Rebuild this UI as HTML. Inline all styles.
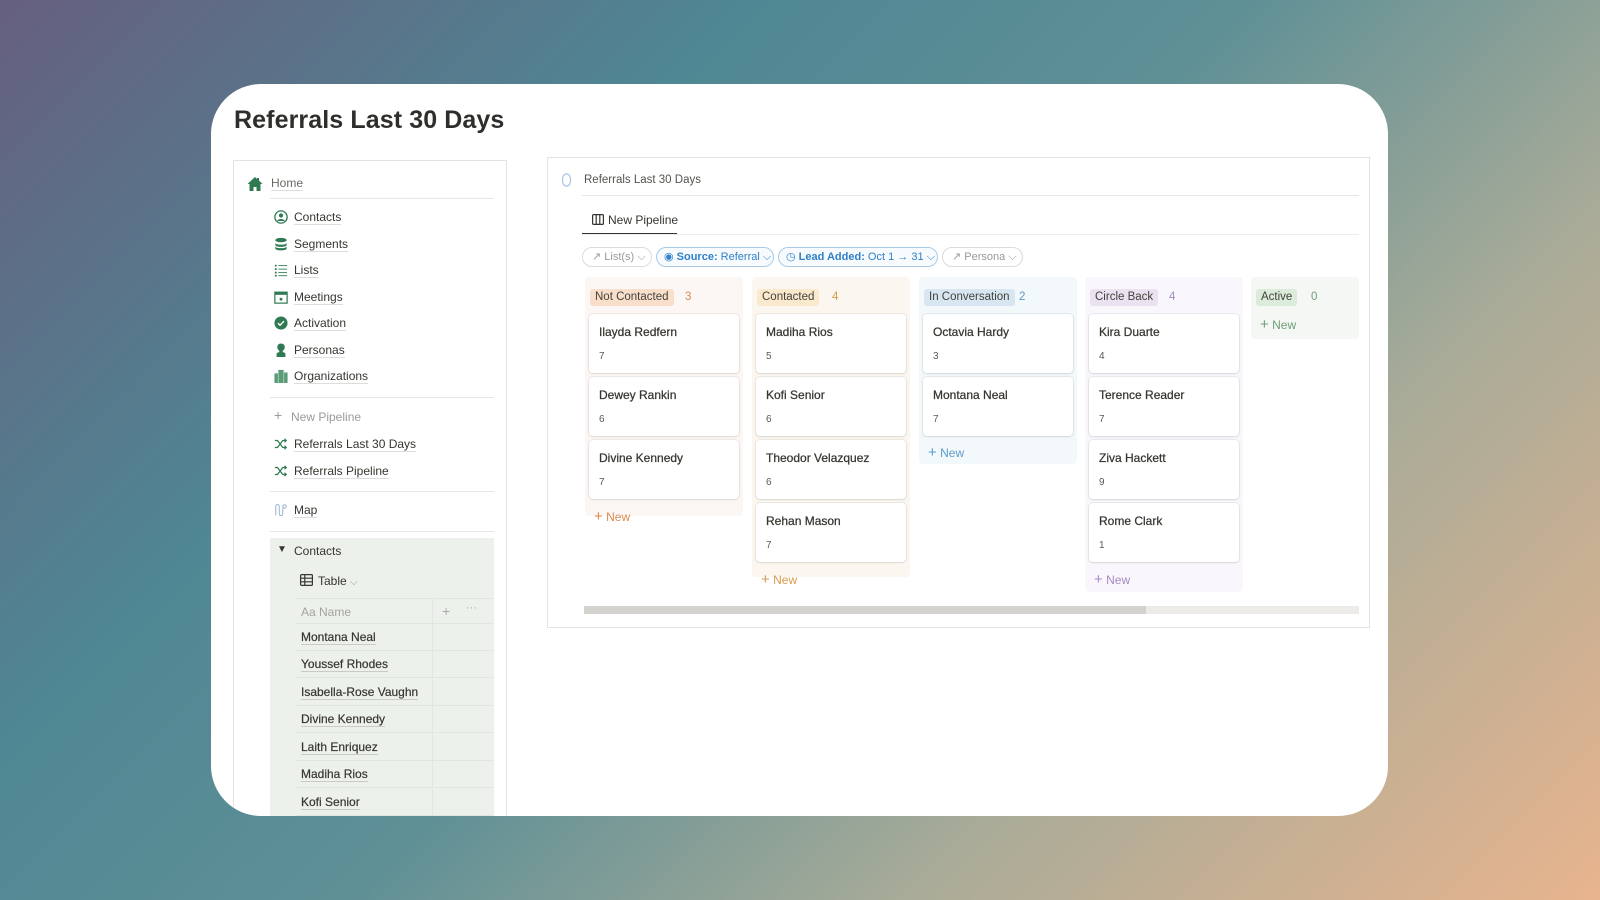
<!DOCTYPE html>
<html><head><meta charset="utf-8"><style>
*{box-sizing:border-box;margin:0;padding:0}
body{width:1600px;height:900px;overflow:hidden;font-family:"Liberation Sans",sans-serif;color:#37352f;
background:linear-gradient(135deg,#665f7f 0%,#4f8794 30%,#5f9096 50%,#a8ab98 72%,#e8b48e 100%);position:relative}
.card{position:absolute;left:211px;top:84px;width:1177px;height:732px;background:#fff;border-radius:50px;overflow:hidden}
.abs{position:absolute}
h1{position:absolute;left:23px;top:22px;font-size:25px;font-weight:bold;color:#2f2e2b;letter-spacing:.1px}
.side{position:absolute;left:22px;top:76px;width:274px;height:700px;border:1px solid #e3e3e1;border-bottom:none}
.it{position:absolute;font-size:12px;color:#37352f}
.it span{border-bottom:1px solid #ddd}
.ln{position:absolute;height:1px;background:#e6e6e4}
.ic{position:absolute;width:14px;height:14px}
.main{position:absolute;left:336px;top:73px;width:823px;height:471px;border:1px solid #e3e3e1}
.pill{position:absolute;top:89px;height:20px;border:1px solid #dcdcdc;border-radius:10px;font-size:11px;color:#9b9a97;line-height:18px;padding-left:9px;white-space:nowrap;overflow:hidden}
.pill.b{border-color:#a9cbe8;color:#2f80c8;background:#f7fbfe}
.col{position:absolute;top:119px;width:158px;border-radius:4px}
.tag{position:absolute;left:5px;top:12px;height:17px;line-height:17px;padding:0 5px;font-size:11.5px;border-radius:3px;color:#44423d}
.cnt{position:absolute;top:12px;line-height:17px;font-size:11.5px}
.k{position:absolute;left:4px;width:150px;height:59px;background:#fff;border-radius:4px;box-shadow:0 0 0 1px rgba(15,15,15,.06),0 1px 2px rgba(15,15,15,.08)}
.k b{position:absolute;left:10px;top:11px;font-size:12px;font-weight:normal;color:#37352f;-webkit-text-stroke:.25px #37352f}
.k i{position:absolute;left:10px;top:37px;font-size:10px;font-style:normal;color:#5a5955}
.nw{position:absolute;left:9px;font-size:12px}
.row{position:absolute;left:26px;width:198px;height:27px;border-bottom:1px solid #e2e6e1;font-size:12px}
.row span{position:absolute;left:5px;top:6px;border-bottom:1px solid #c9cbc7;-webkit-text-stroke:.2px #37352f}
.row:after{content:"";position:absolute;left:136px;top:0;bottom:0;width:1px;background:#e2e6e1}
</style></head><body>
<div class="card">
<h1>Referrals Last 30 Days</h1>
<div class="side">
 <svg class="ic" style="left:13px;top:15px;width:16px;height:16px" viewBox="0 0 16 16"><path d="M8 1L0.5 8h2v7h4v-4h3v4h4V8h2L12 4.5V2h-2v1z" fill="#2f7a52"/></svg>
 <div class="it" style="left:37px;top:15px;color:#6b6a66"><span>Home</span></div>
 <div class="ln" style="left:36px;top:37px;width:224px"></div>
 <svg class="ic" style="left:40px;top:49px" viewBox="0 0 16 16"><circle cx="8" cy="8" r="7" fill="none" stroke="#2f7a52" stroke-width="1.5"/><circle cx="8" cy="6.3" r="2.4" fill="#2f7a52"/><path d="M3.5 12.5c1.5-3 7.5-3 9 0" fill="#2f7a52"/></svg>
 <div class="it" style="left:60px;top:49px"><span>Contacts</span></div>
 <svg class="ic" style="left:40px;top:76px" viewBox="0 0 16 16"><ellipse cx="8" cy="3.5" rx="6.5" ry="2.5" fill="#2f7a52"/><path d="M1.5 6.5c0 3 13 3 13 0v2.5c0 3-13 3-13 0zM1.5 10.5c0 3 13 3 13 0V13c0 3-13 3-13 0z" fill="#2f7a52"/></svg>
 <div class="it" style="left:60px;top:76px"><span>Segments</span></div>
 <svg class="ic" style="left:40px;top:102px" viewBox="0 0 16 16" fill="#2f7a52"><rect x="1" y="2" width="2" height="2"/><rect x="5" y="2.5" width="10" height="1"/><rect x="1" y="6" width="2" height="2"/><rect x="5" y="6.5" width="10" height="1"/><rect x="1" y="10" width="2" height="2"/><rect x="5" y="10.5" width="10" height="1"/><rect x="1" y="13.5" width="2" height="2"/><rect x="5" y="14" width="10" height="1"/></svg>
 <div class="it" style="left:60px;top:102px"><span>Lists</span></div>
 <svg class="ic" style="left:40px;top:129px" viewBox="0 0 16 16"><rect x="1" y="2.5" width="14" height="12.5" fill="none" stroke="#2f7a52" stroke-width="1.4"/><rect x="1" y="2.5" width="14" height="3" fill="#2f7a52"/><rect x="6.5" y="9" width="3" height="3" fill="#2f7a52"/></svg>
 <div class="it" style="left:60px;top:129px"><span>Meetings</span></div>
 <svg class="ic" style="left:40px;top:155px" viewBox="0 0 16 16"><circle cx="8" cy="8" r="7.5" fill="#2f7a52"/><path d="M4.5 8.2l2.4 2.4 4.6-4.8" stroke="#fff" stroke-width="1.6" fill="none"/></svg>
 <div class="it" style="left:60px;top:155px"><span>Activation</span></div>
 <svg class="ic" style="left:40px;top:182px" viewBox="0 0 16 16"><path d="M8 0.5c3 0 4.5 2.2 4.3 4.7-.2 2-1.3 3.2-2.3 3.6v1.5l3 1.2v4.5H3v-4.5l3-1.2V8.8C4.8 8 3.8 6.8 3.8 5 3.8 2.5 5.3.5 8 .5z" fill="#2f7a52"/></svg>
 <div class="it" style="left:60px;top:182px"><span>Personas</span></div>
 <svg class="ic" style="left:40px;top:208px" viewBox="0 0 16 16" fill="#5b9c78"><rect x="0.5" y="5" width="4" height="11"/><rect x="5" y="1" width="6" height="15"/><rect x="11.5" y="4" width="4" height="12"/></svg>
 <div class="it" style="left:60px;top:208px"><span>Organizations</span></div>
 <div class="ln" style="left:36px;top:236px;width:224px"></div>
 <div class="it" style="left:40px;top:246px;color:#9b9a97;font-size:14px">+</div>
 <div class="it" style="left:57px;top:249px;color:#9b9a97">New Pipeline</div>
 <svg class="ic" style="left:40px;top:276px" viewBox="0 0 16 16" fill="none" stroke="#2f7a52" stroke-width="1.4"><path d="M1 4h3l6 8h4M1 12h3l6-8h4M12 2l2 2-2 2M12 10l2 2-2 2"/></svg>
 <div class="it" style="left:60px;top:276px"><span>Referrals Last 30 Days</span></div>
 <svg class="ic" style="left:40px;top:303px" viewBox="0 0 16 16" fill="none" stroke="#2f7a52" stroke-width="1.4"><path d="M1 4h3l6 8h4M1 12h3l6-8h4M12 2l2 2-2 2M12 10l2 2-2 2"/></svg>
 <div class="it" style="left:60px;top:303px"><span>Referrals Pipeline</span></div>
 <div class="ln" style="left:36px;top:330px;width:224px"></div>
 <svg class="ic" style="left:40px;top:342px" viewBox="0 0 16 16" fill="none" stroke="#9ab8d0" stroke-width="1.2"><path d="M2 14V4c0-3 4-3 4 0v8c0 3 4 3 4 0V6"/><circle cx="12" cy="4" r="2"/></svg>
 <div class="it" style="left:60px;top:342px"><span>Map</span></div>
 <div class="ln" style="left:36px;top:370px;width:224px"></div>
 <div class="abs" style="left:36px;top:377px;width:224px;height:330px;background:#edf1ec">
  <div class="it" style="left:7px;top:6px;font-size:10px">▼</div>
  <div class="it" style="left:24px;top:6px">Contacts</div>
  <svg class="ic" style="left:30px;top:36px;width:13px;height:12px" viewBox="0 0 13 12" fill="none" stroke="#37352f" stroke-width="1.2"><rect x=".6" y=".6" width="11.8" height="10.8" rx="1"/><path d="M.6 4.2h11.8M.6 7.8h11.8M4.8.6v10.8"/></svg>
  <div class="it" style="left:48px;top:36px">Table <span style="border:none;color:#999;font-size:10px">⌵</span></div>
  <div class="row" style="top:60px;border-top:1px solid #e2e6e1;height:26px"><span style="color:#a3a39f;border:none;-webkit-text-stroke:0">Aa Name</span><b style="position:absolute;left:146px;top:4px;color:#aaa;font-weight:normal;font-size:14px">+</b><b style="position:absolute;left:170px;top:3px;color:#aaa;font-weight:normal;font-size:11px">···</b></div>
  <div class="row" style="top:86px"><span>Montana Neal</span></div>
  <div class="row" style="top:113px"><span>Youssef Rhodes</span></div>
  <div class="row" style="top:141px"><span>Isabella-Rose Vaughn</span></div>
  <div class="row" style="top:168px"><span>Divine Kennedy</span></div>
  <div class="row" style="top:196px"><span>Laith Enriquez</span></div>
  <div class="row" style="top:223px"><span>Madiha Rios</span></div>
  <div class="row" style="top:251px"><span>Kofi Senior</span></div>
 </div>
</div>

<div class="main">
 <svg class="abs" style="left:13px;top:15px" width="11" height="14" viewBox="0 0 11 14"><path d="M5.5 1C2.5 1 1.5 4 1.5 7s1 6 4 6 4-3 4-6-1-6-4-6z" fill="none" stroke="#a8c8e6" stroke-width="1.3"/></svg>
 <div class="abs" style="left:36px;top:16px;font-size:11.5px;color:#55534e">Referrals Last 30 Days</div>
 <div class="ln" style="left:34px;top:37px;width:777px"></div>
 <svg class="abs" style="left:44px;top:56px" width="12" height="11" viewBox="0 0 12 11" fill="none" stroke="#37352f" stroke-width="1.2"><rect x=".6" y=".6" width="10.8" height="9.8" rx="1"/><path d="M4.2.6v9.8M7.8.6v9.8"/></svg>
 <div class="abs" style="left:60px;top:55px;font-size:12px;color:#37352f">New Pipeline</div>
 <div class="abs" style="left:34px;top:75px;width:95px;height:2px;background:#37352f"></div>
 <div class="ln" style="left:34px;top:76px;width:777px;background:#ececea"></div>
 <div class="pill" style="left:34px;width:70px">↗ List(s) ⌵</div>
 <div class="pill b" style="left:108px;width:118px;padding-left:7px">◉ <b>Source:</b> Referral ⌵</div>
 <div class="pill b" style="left:230px;width:160px;padding-left:7px">◷ <b>Lead Added:</b> Oct 1 → 31 ⌵</div>
 <div class="pill" style="left:394px;width:81px">↗ Persona ⌵</div>

 <div class="col" style="left:37px;height:239px;background:#fcf7f4">
  <div class="tag" style="background:#f9dfca">Not Contacted</div><div class="cnt" style="left:100px;color:#d58a55">3</div>
  <div class="k" style="top:37px"><b>Ilayda Redfern</b><i>7</i></div>
  <div class="k" style="top:100px"><b>Dewey Rankin</b><i>6</i></div>
  <div class="k" style="top:163px"><b>Divine Kennedy</b><i>7</i></div>
  <div class="nw" style="top:231px;color:#d88a4e"><span style="font-size:15px">+</span> New</div>
 </div>
 <div class="col" style="left:204px;height:300px;background:#fbf7f0">
  <div class="tag" style="background:#fbe9cd">Contacted</div><div class="cnt" style="left:80px;color:#d9994a">4</div>
  <div class="k" style="top:37px"><b>Madiha Rios</b><i>5</i></div>
  <div class="k" style="top:100px"><b>Kofi Senior</b><i>6</i></div>
  <div class="k" style="top:163px"><b>Theodor Velazquez</b><i>6</i></div>
  <div class="k" style="top:226px"><b>Rehan Mason</b><i>7</i></div>
  <div class="nw" style="top:294px;color:#d9994a"><span style="font-size:15px">+</span> New</div>
 </div>
 <div class="col" style="left:371px;height:187px;background:#f3f8fb">
  <div class="tag" style="background:#d7e6f0">In Conversation</div><div class="cnt" style="left:100px;color:#5b9ccb">2</div>
  <div class="k" style="top:37px"><b>Octavia Hardy</b><i>3</i></div>
  <div class="k" style="top:100px"><b>Montana Neal</b><i>7</i></div>
  <div class="nw" style="top:167px;color:#5b9ccb"><span style="font-size:15px">+</span> New</div>
 </div>
 <div class="col" style="left:537px;height:315px;background:#f9f7fb">
  <div class="tag" style="background:#ebe2f1">Circle Back</div><div class="cnt" style="left:84px;color:#a888c6">4</div>
  <div class="k" style="top:37px"><b>Kira Duarte</b><i>4</i></div>
  <div class="k" style="top:100px"><b>Terence Reader</b><i>7</i></div>
  <div class="k" style="top:163px"><b>Ziva Hackett</b><i>9</i></div>
  <div class="k" style="top:226px"><b>Rome Clark</b><i>1</i></div>
  <div class="nw" style="top:294px;color:#a888c6"><span style="font-size:15px">+</span> New</div>
 </div>
 <div class="col" style="left:703px;width:108px;height:62px;background:#f4f7f3">
  <div class="tag" style="background:#dcecda">Active</div><div class="cnt" style="left:60px;color:#6e9f76">0</div>
  <div class="nw" style="top:39px;color:#6e9f76"><span style="font-size:15px">+</span> New</div>
 </div>
 <div class="abs" style="left:36px;top:448px;width:775px;height:8px;background:#ecebe8"></div>
 <div class="abs" style="left:36px;top:448px;width:562px;height:8px;background:#d3d2ce"></div>
</div>
</div>
</body></html>
